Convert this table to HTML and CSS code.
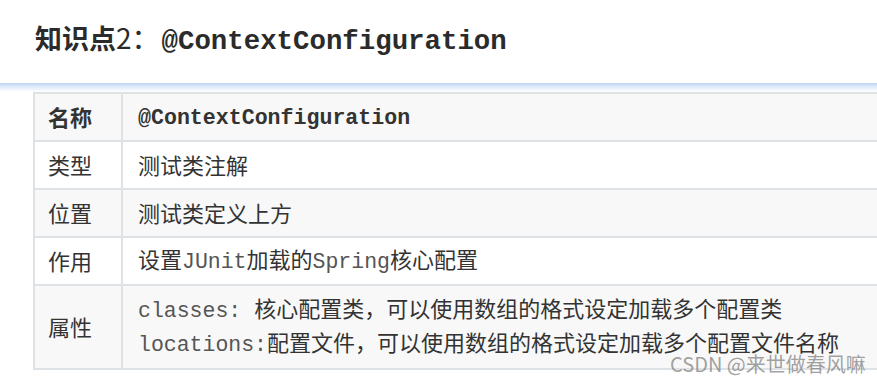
FILE: index.html
```html
<!DOCTYPE html>
<html lang="zh">
<head>
<meta charset="utf-8">
<link rel="stylesheet" href="styles.css">
</head>
<body>
<div class="page">
  <header class="head">
    <h1 class="title"><span class="cjk">知识点</span><span class="num">2：</span><code class="title-code">@ContextConfiguration</code></h1>
  </header>
  <div class="band"></div>
  <table class="info">
    <tr class="row gray">
      <td class="label strong">名称</td>
      <td class="value"><code class="code-strong">@ContextConfiguration</code></td>
    </tr>
    <tr class="row">
      <td class="label">类型</td>
      <td class="value">测试类注解</td>
    </tr>
    <tr class="row gray">
      <td class="label">位置</td>
      <td class="value">测试类定义上方</td>
    </tr>
    <tr class="row">
      <td class="label">作用</td>
      <td class="value">设置<code class="code">JUnit</code>加载的<code class="code">Spring</code>核心配置</td>
    </tr>
    <tr class="row gray tall">
      <td class="label">属性</td>
      <td class="value multi"><code class="code">classes: </code>核心配置类，可以使用数组的格式设定加载多个配置类<br><code class="code">locations:</code>配置文件，可以使用数组的格式设定加载多个配置文件名称</td>
    </tr>
  </table>
  <div class="watermark">CSDN @来世做春风嘛</div>
</div>
</body>
</html>
```

FILE: styles.css
```css
html, body {
  margin: 0;
  padding: 0;
  background: #ffffff;
  overflow: hidden;
}
body {
  width: 877px;
  height: 384px;
  font-family: "Noto Sans CJK SC", "Noto Sans", sans-serif;
  color: #333333;
}
.page {
  position: relative;
  width: 877px;
  height: 384px;
  overflow: hidden;
}
.head {
  height: 83px;
  box-sizing: border-box;
  padding: 18px 0 0 35px;
}
.title {
  margin: 0;
  font-size: 27px;
  line-height: 38px;
  white-space: nowrap;
  color: #2b2b2b;
  font-weight: 700;
}
.title .num {
  font-weight: 400;
  font-size: 28px;
  font-family: "Noto Sans CJK SC", sans-serif;
}
.title-code {
  font-family: "Liberation Mono", monospace;
  font-weight: 700;
  font-size: 27.4px;
  margin-left: 2px;
}
.band {
  height: 9px;
  background: linear-gradient(to bottom, #bcd3f1 0%, #dfeafa 40%, #ffffff 100%);
}
.info {
  margin-left: 33px;
  width: 900px;
  border-collapse: separate;
  border-spacing: 0;
  border-top: 2px solid #dfe2e5;
  border-left: 2px solid #dfe2e5;
  font-size: 22px;
}
.row td {
  border-right: 2px solid #dfe2e5;
  border-bottom: 2px solid #dfe2e5;
  height: 43px;
  padding: 0 0 3px 0;
  vertical-align: middle;
  line-height: 30px;
}
.row.gray td {
  background: #f8f8f8;
}
.row.tall td {
  height: 80px;
  padding-bottom: 2px;
}
.label {
  width: 73px;
  padding-left: 13px !important;
  white-space: nowrap;
}
.label.strong {
  font-weight: 700;
}
.value {
  padding-left: 15px !important;
  white-space: nowrap;
}
.code-strong {
  font-family: "Liberation Mono", monospace;
  font-weight: 700;
  font-size: 21.6px;
  color: #333333;
}
.code {
  font-family: "Liberation Mono", monospace;
  font-size: 21.5px;
  color: #555555;
}
.watermark {
  position: absolute;
  left: 670px;
  top: 351px;
  font-size: 20px;
  line-height: 26px;
  color: rgba(120, 120, 120, 0.7);
  font-family: "Noto Sans CJK SC", "Noto Sans", sans-serif;
  white-space: nowrap;
}
```
